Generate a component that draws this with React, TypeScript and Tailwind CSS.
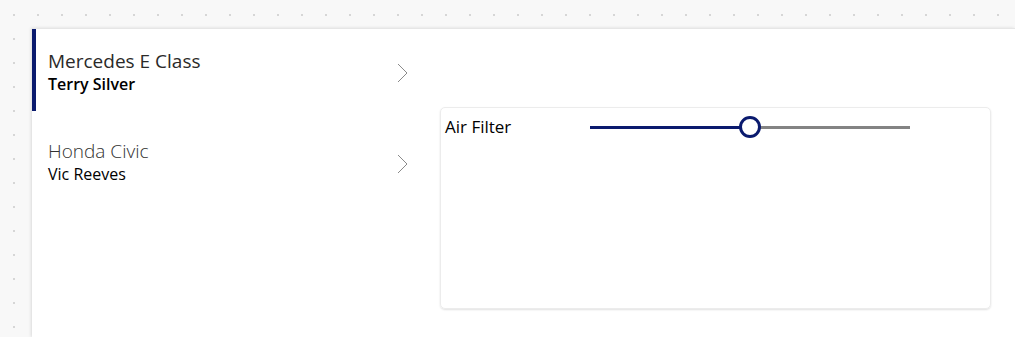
import React from "react";

function Chevron() {
  return (
    <svg width="11" height="20" viewBox="0 0 11 20" className="shrink-0">
      <path d="M1 1 L10 10 L1 19" fill="none" stroke="#8a8a8a" strokeWidth="1" />
    </svg>
  );
}

export default function App() {
  return (
    <div
      className="w-[1015px] h-[337px] overflow-hidden bg-[#f8f8f8] bg-[radial-gradient(circle,#d6d6d6_1px,transparent_1.2px)] bg-[size:24px_24px] bg-[position:2px_3px] pt-[28px] pl-[32px]"
      style={{ fontFamily: '"Open Sans", "Noto Sans", sans-serif' }}
    >
      <div className="flex h-[309px] bg-white border-t border-[#e6e6e6] shadow-[-1px_0_3px_rgba(0,0,0,0.12)]">
        <div className="w-[388px] flex flex-col">
          <div className="flex items-center h-[82px] border-l-4 border-[#0a1a6e] pl-[12px] pr-[12px]">
            <div className="flex-1 flex flex-col pt-[4px]">
              <span className="text-[19px] leading-[24px] text-[#2b2a29]">Mercedes E Class</span>
              <span className="text-[16px] leading-[22px] font-semibold text-black">Terry Silver</span>
            </div>
            <div className="mt-[5px]">
              <Chevron />
            </div>
          </div>
          <div className="flex items-center h-[82px] pl-[16px] pr-[12px] pt-[18px]">
            <div className="flex-1 flex flex-col pt-[2px]">
              <span className="text-[19px] leading-[24px] font-light text-[#323130]">Honda Civic</span>
              <span className="text-[16px] leading-[22px] text-black">Vic Reeves</span>
            </div>
            <div className="mt-[5px]">
              <Chevron />
            </div>
          </div>
        </div>
        <div className="pl-[20px] pt-[78px]">
          <div className="w-[551px] h-[202px] rounded-[5px] border border-[#ececec] shadow-[0_1px_2px_rgba(0,0,0,0.12)] pl-[4px] pt-[7px]">
            <div className="flex items-center h-[24px]">
              <span className="w-[145px] text-[17px] leading-[22px] text-black">Air Filter</span>
              <div className="relative w-[320px] h-[24px] flex items-center">
                <div className="h-[3px] w-[150px] bg-[#0a1a6e]" />
                <div className="h-[3px] flex-1 bg-[#838383]" />
                <div className="absolute left-[149px] top-[1px] w-[22px] h-[22px] rounded-full border-[3px] border-[#0a1a6e] bg-white" />
              </div>
            </div>
          </div>
        </div>
      </div>
    </div>
  );
}
